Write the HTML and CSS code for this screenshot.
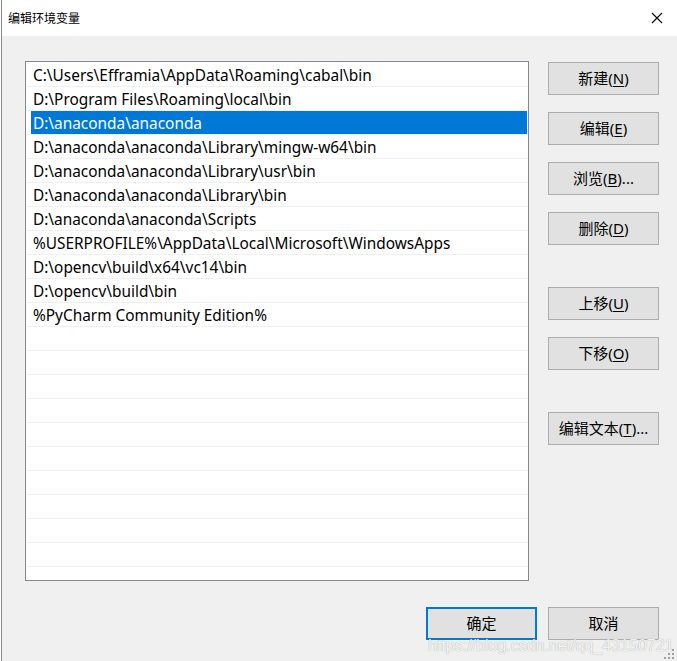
FILE: index.html
```html
<!DOCTYPE html>
<html lang="zh-CN">
<head>
    <meta charset="UTF-8">
    <title>编辑环境变量</title>
    <link rel="stylesheet" href="styles.css">
</head>
<body>

    <div class="dialog">
        <div class="titlebar">
            <span class="title">编辑环境变量</span>
            <svg class="close-icon" width="12" height="12" viewBox="0 0 12 12">
                <path d="M1 1 L11 11 M11 1 L1 11" stroke="#000" stroke-width="1.1" fill="none"/>
            </svg>
        </div>

        <div class="content">
            <div class="main">
                <div class="path-list" id="pathList">
                    <!-- rows come from the script below -->
                </div>

                <div class="side-buttons">
                    <button class="btn">新建(<u>N</u>)</button>
                    <button class="btn">编辑(<u>E</u>)</button>
                    <button class="btn">浏览(<u>B</u>)...</button>
                    <button class="btn">删除(<u>D</u>)</button>
                    <button class="btn group-gap">上移(<u>U</u>)</button>
                    <button class="btn">下移(<u>O</u>)</button>
                    <button class="btn group-gap">编辑文本(<u>T</u>)...</button>
                </div>
            </div>

            <div class="footer">
                <button class="btn btn-default">确定</button>
                <button class="btn">取消</button>
            </div>
        </div>

        <div class="watermark">https://blog.csdn.net/qq_43150721</div>
        <svg class="grip" width="10" height="10" viewBox="0 0 10 10">
            <rect x="8" y="0" width="2" height="2" fill="#a0a0a0"/>
            <rect x="4" y="4" width="2" height="2" fill="#a0a0a0"/>
            <rect x="8" y="4" width="2" height="2" fill="#a0a0a0"/>
            <rect x="0" y="8" width="2" height="2" fill="#a0a0a0"/>
            <rect x="4" y="8" width="2" height="2" fill="#a0a0a0"/>
            <rect x="8" y="8" width="2" height="2" fill="#a0a0a0"/>
        </svg>
    </div>

    <script>
        const paths = [
            'C:\\Users\\Efframia\\AppData\\Roaming\\cabal\\bin',
            'D:\\Program Files\\Roaming\\local\\bin',
            'D:\\anaconda\\anaconda',
            'D:\\anaconda\\anaconda\\Library\\mingw-w64\\bin',
            'D:\\anaconda\\anaconda\\Library\\usr\\bin',
            'D:\\anaconda\\anaconda\\Library\\bin',
            'D:\\anaconda\\anaconda\\Scripts',
            '%USERPROFILE%\\AppData\\Local\\Microsoft\\WindowsApps',
            'D:\\opencv\\build\\x64\\vc14\\bin',
            'D:\\opencv\\build\\bin',
            '%PyCharm Community Edition%'
        ];

        const list = document.getElementById('pathList');
        for (let i = 0; i < 22; i++) {
            const row = document.createElement('div');
            row.classList.add('row');
            if (i === 2) row.classList.add('selected');
            const cell = document.createElement('span');
            cell.textContent = paths[i] || '';
            row.appendChild(cell);
            list.appendChild(row);
        }
    </script>
</body>
</html>
```

FILE: styles.css
```css
body {
    margin: 0;
    background-color: #ffffff;
    font-family: "Noto Sans", "Noto Sans CJK SC", sans-serif;
    color: #000;
}
.dialog {
    position: relative;
    width: 675px;
    height: 661px;
    margin-left: 1px;
    border-left: 1px solid #8a8a8a;
    overflow: hidden;
    display: flex;
    flex-direction: column;
}
.titlebar {
    height: 36px;
    background-color: #ffffff;
    display: flex;
    align-items: center;
    justify-content: space-between;
    padding: 0 14px 0 6px;
    flex-shrink: 0;
}
.title {
    font-family: "Noto Sans CJK SC", sans-serif;
    font-size: 12px;
    margin-top: -1px;
}
.close-icon {
    display: block;
}
.content {
    flex: 1;
    background-color: #f0f0f0;
    padding: 25px 18px 0 23px;
}
.main {
    display: flex;
    align-items: flex-start;
}
.path-list {
    width: 504px;
    height: 520px;
    border: 1px solid #828790;
    background-color: #ffffff;
    padding-top: 1px;
    box-sizing: border-box;
    overflow: hidden;
    flex-shrink: 0;
}
.row {
    height: 23px;
    border-bottom: 1px solid #f0f0f0;
    padding: 0 1px 0 5px;
}
.row span {
    display: block;
    height: 23px;
    line-height: 26px;
    padding-left: 2px;
    font-size: 15.4px;
    white-space: nowrap;
    color: #000;
}
.row.selected span {
    background-color: #0078d7;
    color: #ffffff;
}
.side-buttons {
    display: flex;
    flex-direction: column;
    gap: 17px;
    margin-left: 19px;
    margin-top: 1px;
}
.btn {
    width: 111px;
    height: 33px;
    background-color: #e1e1e1;
    border: 1px solid #adadad;
    font-family: "Noto Sans", "Noto Sans CJK SC", sans-serif;
    font-size: 15px;
    color: #000;
    padding: 0;
    line-height: 1;
}
.btn u {
    text-underline-offset: 2px;
}
.group-gap {
    margin-top: 25px;
}
.footer {
    display: flex;
    justify-content: flex-end;
    gap: 11px;
    margin-top: 26px;
}
.btn-default {
    border: 2px solid #0078d7;
}
.watermark {
    position: absolute;
    left: 426px;
    top: 637px;
    font-family: "Liberation Sans", sans-serif;
    font-size: 16px;
    color: rgba(255, 255, 255, 0.9);
    text-shadow: 0 0 1px rgba(110, 110, 110, 0.7);
    white-space: nowrap;
}
.grip {
    position: absolute;
    right: 3px;
    bottom: 2px;
}
```
